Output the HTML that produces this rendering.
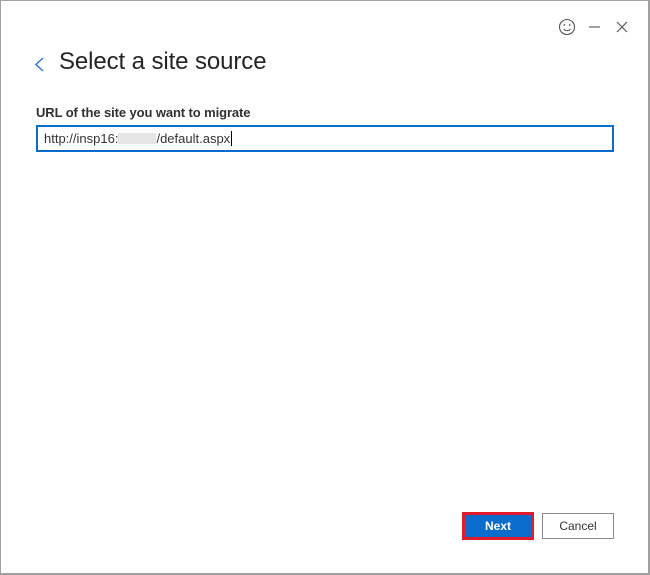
<!DOCTYPE html>
<html><head><style>
*{margin:0;padding:0;box-sizing:border-box}
body{width:650px;height:575px;background:#fff;font-family:"Liberation Sans",sans-serif;position:relative;overflow:hidden}
.frame{position:absolute;left:0;top:0;width:650px;height:575px;border:1px solid #a0a0a0;border-right-width:2px;border-bottom-width:2px}
.t{position:absolute;left:59px;top:48px;font-size:24px;color:#252525;letter-spacing:-0.1px}
.lbl{position:absolute;left:36px;top:105px;font-size:13px;color:#323130;font-weight:bold;letter-spacing:-0.1px}
.inp{position:absolute;left:36px;top:125px;width:578px;height:27px;border:2px solid #0a6ccc;font-size:13px;color:#333;padding:4px 0 0 6px}
.blur{display:inline-block;width:38px;height:11px;background:#e6e6e6;vertical-align:-1px}
.next{position:absolute;left:462px;top:512px;width:72px;height:28px;border:3px solid #e21b2a;background:#0a6ccc;padding:1px}
.next span{display:block;color:#fff;font-weight:bold;font-size:12px;text-align:center;line-height:20px}
.cancel{position:absolute;left:542px;top:513px;width:72px;height:26px;border:1px solid #8a8a8a;font-size:12px;color:#333;text-align:center;line-height:24px}
</style></head><body>
<div class="frame"></div>
<svg style="position:absolute;left:0;top:0" width="650" height="100">
<circle cx="567" cy="27" r="7.5" fill="none" stroke="#555" stroke-width="1.1"/>
<circle cx="564.3" cy="25" r="0.9" fill="#555"/><circle cx="569.7" cy="25" r="0.9" fill="#555"/>
<path d="M563.5 29 Q567 32.5 570.5 29" fill="none" stroke="#555" stroke-width="1"/>
<line x1="589" y1="27" x2="600" y2="27" stroke="#555" stroke-width="1.1"/>
<path d="M617 22 L627 32 M627 22 L617 32" stroke="#555" stroke-width="1.1"/>
<path d="M43 58 L36 64.5 L43 71" fill="none" stroke="#2b7bd0" stroke-width="1.5"/>
</svg>
<div class="t">Select a site source</div>
<div class="lbl">URL of the site you want to migrate</div>
<div class="inp">http://insp16:<span class="blur"></span>/default.aspx<span style="border-left:1px solid #000;margin-left:1px"></span></div>
<div class="next"><span>Next</span></div>
<div class="cancel">Cancel</div>
</body></html>
